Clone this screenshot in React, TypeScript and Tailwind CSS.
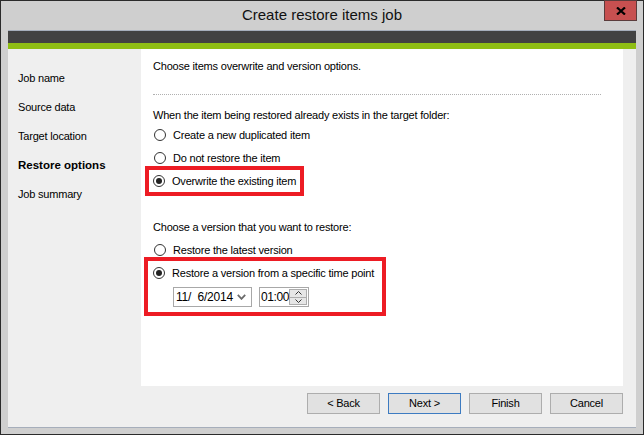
import React from "react";

function Radio({ checked, label }: { checked?: boolean; label: string }) {
  return (
    <div className="flex items-center h-[23px]">
      <span className="w-[12px] h-[12px] ml-[1px] rounded-full border border-[#333333] bg-white flex items-center justify-center">
        {checked && <span className="w-[6px] h-[6px] rounded-full bg-[#222222]" />}
      </span>
      <span className="ml-[7px]">{label}</span>
    </div>
  );
}

const navItems = ["Job name", "Source data", "Target location", "Restore options", "Job summary"];

export default function App() {
  return (
    <div className="w-[644px] h-[435px] border border-[#2b2b2b] bg-[#cfcfcf] flex flex-col font-['Liberation_Sans',Arial,sans-serif] text-[11px] tracking-[-0.2px] text-black">
      {/* title bar */}
      <div className="relative h-[29px] flex items-center justify-center">
        <span className="text-[15px] tracking-normal text-[#111111] -mt-[1px]">Create restore items job</span>
        <button className="absolute right-[6px] -top-[1px] w-[33px] h-[21px] bg-[#c75050] border border-[#5b3c3c] flex items-center justify-center">
          <svg width="10" height="8" viewBox="0 0 10 8">
            <path d="M1 0.5 L9 7.5 M9 0.5 L1 7.5" stroke="#000" strokeWidth="2.2" />
          </svg>
        </button>
      </div>

      {/* inner panel */}
      <div className="mx-[7px] h-[398px] flex flex-col border-t border-b border-[#a6aebb]">
        <div className="h-[12px] bg-[#424242]" />
        <div className="h-[6px] bg-[#8fbe14]" />
        <div className="flex-1 flex">
          {/* nav */}
          <div className="w-[133px] bg-[#efefef] pt-[15px] pl-[10px] flex flex-col">
            {navItems.map((item) => (
              <div
                key={item}
                className={
                  item === "Restore options"
                    ? "h-[29px] flex items-center font-bold text-[11.5px] tracking-normal"
                    : "h-[29px] flex items-center"
                }
              >
                {item}
              </div>
            ))}
          </div>

          {/* main */}
          <div className="w-[482px] flex flex-col bg-[#efefef]">
            <div className="h-[337px] bg-white pl-[12px] pr-[22px] pt-[9px] leading-[16px]">
              <div>Choose items overwrite and version options.</div>
              <div className="mt-[20px] border-t border-dotted border-[#b0b0b0]" />
              <div className="mt-[12px]">When the item being restored already exists in the target folder:</div>
              <Radio label="Create a new duplicated item" />
              <Radio label="Do not restore the item" />
              <div className="-ml-[8px] -my-[3.5px] w-[159px] h-[30px] border-4 border-[#ed1c24] pl-[3px] flex items-center">
                <Radio checked label="Overwrite the existing item" />
              </div>

              <div className="mt-[27px] mb-[3px]">Choose a version that you want to restore:</div>
              <Radio label="Restore the latest version" />
              <div className="-ml-[9px] -mt-[4px] w-[242px] h-[59px] border-4 border-[#ed1c24] pl-[4px]">
                <Radio checked label="Restore a version from a specific time point" />
                <div className="mt-[3px] ml-[21px] flex items-center gap-[7px]">
                  <div className="w-[79px] h-[20px] border border-[#a8a8a8] bg-white flex items-center pl-[2px] pr-[5px]">
                    <span className="flex-1 whitespace-pre text-[12px]">11/  6/2014</span>
                    <svg width="9" height="6" viewBox="0 0 9 6">
                      <path d="M0.8 0.8 L4.5 4.8 L8.2 0.8" stroke="#6b6b6b" strokeWidth="1.8" fill="none" />
                    </svg>
                  </div>
                  <div className="w-[50px] h-[20px] border border-[#a8a8a8] bg-white flex items-center">
                    <span className="flex-1 pl-[1px] text-[12px] tracking-[-0.4px]">01:00</span>
                    <div className="w-[18px] h-[16px] mr-[1px] border border-[#acacac] bg-[#e6e6e6] flex flex-col">
                      <div className="flex-1 flex items-center justify-center border-b border-[#acacac]">
                        <svg width="7" height="4" viewBox="0 0 7 4">
                          <path d="M0.5 3.5 L3.5 0.5 L6.5 3.5" stroke="#333" strokeWidth="1" fill="none" />
                        </svg>
                      </div>
                      <div className="flex-1 flex items-center justify-center">
                        <svg width="7" height="4" viewBox="0 0 7 4">
                          <path d="M0.5 0.5 L3.5 3.5 L6.5 0.5" stroke="#333" strokeWidth="1" fill="none" />
                        </svg>
                      </div>
                    </div>
                  </div>
                </div>
              </div>
            </div>

            {/* buttons */}
            <div className="pt-[7px] flex justify-end gap-[8px]">
              {["< Back", "Next >", "Finish", "Cancel"].map((b) => (
                <button
                  key={b}
                  className={
                    b === "Next >"
                      ? "w-[73px] h-[21px] border border-[#3d7bc1] bg-[#e1e1e1] text-[11px]"
                      : "w-[73px] h-[21px] border border-[#adadad] bg-[#e1e1e1] text-[11px]"
                  }
                >
                  {b}
                </button>
              ))}
            </div>
          </div>

          {/* right gutter */}
          <div className="w-[13px] bg-[#efefef]" />
        </div>
      </div>
    </div>
  );
}
